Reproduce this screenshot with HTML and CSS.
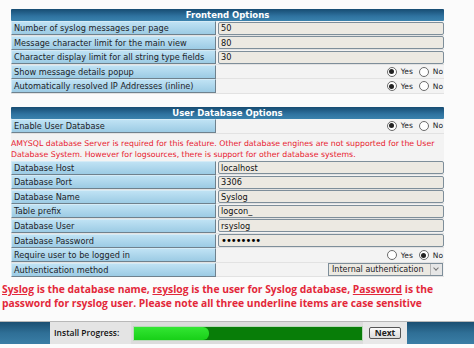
FILE: index.html
```html
<!DOCTYPE html>
<html lang="en">
<head>
    <meta charset="UTF-8">
    <title>Install - Step 7</title>
    <link rel="stylesheet" href="styles.css">
</head>
<body>
    <div class="page">
        <div class="panel">
            <div class="head">Frontend Options</div>
            <div class="row"><div class="label">Number of syslog messages per page</div><div class="value"><input class="field" value="50"></div></div>
            <div class="row"><div class="label">Message character limit for the main view</div><div class="value"><input class="field" value="80"></div></div>
            <div class="row"><div class="label">Character display limit for all string type fields</div><div class="value"><input class="field" value="30"></div></div>
            <div class="row"><div class="label">Show message details popup</div><div class="value opts"><span class="radio on"></span>Yes<span class="radio"></span>No</div></div>
            <div class="row"><div class="label">Automatically resolved IP Addresses (inline)</div><div class="value opts"><span class="radio on"></span>Yes<span class="radio"></span>No</div></div>
        </div>

        <div class="panel second">
            <div class="head">User Database Options</div>
            <div class="row"><div class="label">Enable User Database</div><div class="value opts"><span class="radio on"></span>Yes<span class="radio"></span>No</div></div>
            <p class="warn">AMYSQL database Server is required for this feature. Other database engines are not supported for the User<br>Database System. However for logsources, there is support for other database systems.</p>
            <div class="row"><div class="label">Database Host</div><div class="value"><input class="field" value="localhost"></div></div>
            <div class="row"><div class="label">Database Port</div><div class="value"><input class="field" value="3306"></div></div>
            <div class="row"><div class="label">Database Name</div><div class="value"><input class="field" value="Syslog"></div></div>
            <div class="row"><div class="label">Table prefix</div><div class="value"><input class="field" value="logcon_"></div></div>
            <div class="row"><div class="label">Database User</div><div class="value"><input class="field" value="rsyslog"></div></div>
            <div class="row"><div class="label">Database Password</div><div class="value"><input class="field pass" type="password" value="12345678"></div></div>
            <div class="row"><div class="label">Require user to be logged in</div><div class="value opts"><span class="radio"></span>Yes<span class="radio on"></span>No</div></div>
            <div class="row"><div class="label">Authentication method</div><div class="value opts"><div class="select"><span>Internal authentication</span><span class="arrow"></span></div></div></div>
        </div>

        <p class="note"><u>Syslog</u> is the database name, <u>rsyslog</u> is the user for Syslog database, <u>Password</u> is the<br>password for rsyslog user. Please note all three underline items are case sensitive</p>
    </div>

    <div class="bar">
        <div class="blue left"></div>
        <div class="progress-label">Install Progress:</div>
        <div class="progress"><div class="fill"></div></div>
        <div class="next-cell"><button class="next">Next</button></div>
        <div class="blue right"></div>
    </div>
</body>
</html>
```

FILE: styles.css
```css
*,*::after,*::before{
    box-sizing: border-box;
}
body{
    margin: 0;
    background-color: #fbfbfb;
    font-family: "DejaVu Sans", Verdana, sans-serif;
    font-size: 8px;
    color: #1c2328;
    height: 348px;
    overflow: hidden;
}
.page{
    padding: 9px 30px 0 11px;
}
.panel{
    background-color: #f3f3f3;
}
.panel.second{
    margin-top: 13px;
}
.head{
    height: 12px;
    line-height: 12px;
    text-align: center;
    color: white;
    font-weight: bold;
    font-size: 8.5px;
    background: linear-gradient(#174c72, #2f73a0 60%, #3b82ad);
    border-radius: 1px;
}
.row{
    display: grid;
    grid-template-columns: 205px 1fr;
    gap: 1px;
    height: 14.6px;
    border-bottom: 1px solid #e2e2e2;
}
.label{
    background: linear-gradient(#bfe2f4, #9ccbe4);
    border: 1px solid #d5ebf6;
    border-right-color: #6f818d;
    border-bottom-color: #6f818d;
    padding-left: 2px;
    line-height: 12px;
    font-size: 8.2px;
    white-space: nowrap;
}
.value{
    display: flex;
    align-items: center;
    padding: 0 0 0 1px;
}
.field{
    width: 100%;
    height: 13px;
    margin: 0;
    padding: 0 2px;
    font-family: "DejaVu Sans", Verdana, sans-serif;
    font-size: 8.2px;
    color: #111;
    background-color: #ece9e2;
    border: 1px solid #7e8e9a;
    border-radius: 2px;
}
.field.pass{
    font-size: 10px;
    letter-spacing: -1px;
    color: #000;
}
.opts{
    justify-content: flex-end;
    padding-right: 1px;
    font-size: 7.5px;
}
.radio{
    width: 10px;
    height: 10px;
    border: 1px solid #6b6b6b;
    border-radius: 50%;
    background-color: white;
    margin: 0 4px 0 6px;
    display: flex;
    align-items: center;
    justify-content: center;
}
.radio.on::after{
    content: '';
    width: 5px;
    height: 5px;
    border-radius: 50%;
    background-color: #222;
}
.select{
    display: flex;
    align-items: center;
    width: 115px;
    height: 13px;
    border: 1px solid #7e8e9a;
    background-color: #ece9e2;
    font-size: 8px;
    padding-left: 3px;
}
.select span:first-child{
    flex: 1;
}
.arrow{
    width: 12px;
    height: 11px;
    border-left: 1px solid #b5b5b5;
    background-color: #e6e6e6;
    position: relative;
}
.arrow::after{
    content: '';
    position: absolute;
    left: 3px;
    top: 2px;
    width: 4px;
    height: 4px;
    border-right: 1px solid #777;
    border-bottom: 1px solid #777;
    transform: rotate(45deg);
}
.warn{
    margin: 0;
    padding: 4px 0 0 0;
    color: #e8202e;
    font-size: 7.8px;
    line-height: 11px;
    height: 27px;
    white-space: nowrap;
}
.note{
    margin: 5px 0 0 -9px;
    width: 445px;
    color: #e3283a;
    font-family: "Open Sans", sans-serif;
    font-weight: bold;
    font-size: 10.3px;
    line-height: 14px;
    white-space: nowrap;
}
.bar{
    position: absolute;
    top: 321px;
    left: 0;
    width: 474px;
    height: 23px;
    display: flex;
    background-color: #dcdcdc;
    border-top: 1px solid #b8b8b8;
}
.blue{
    background: linear-gradient(#1b4f72, #2f6f96 50%, #3a7ea6);
}
.blue.left{
    width: 50px;
}
.blue.right{
    flex: 1;
}
.progress-label{
    width: 81px;
    padding-left: 4px;
    line-height: 21px;
    font-family: "Open Sans", sans-serif;
    font-size: 8.5px;
    font-weight: 600;
    background-color: #e4e4e4;
    color: #111;
}
.progress{
    width: 230px;
    margin: 4px 0 3px 2px;
    background-color: #087d08;
    border: 1px solid #b9d8b9;
}
.fill{
    width: 33%;
    height: 100%;
    border-radius: 0 6px 6px 0;
    background: linear-gradient(#33e633, #18d018);
}
.next-cell{
    width: 44px;
    display: flex;
    align-items: center;
    justify-content: center;
    background-color: #e8e8e8;
}
.next{
    width: 32px;
    height: 12px;
    padding: 0;
    font-family: "Open Sans", sans-serif;
    font-size: 8.5px;
    font-weight: bold;
    color: #222;
    border: 1px solid #555;
    border-radius: 2px;
    background: linear-gradient(#fafafa, #dcdcdc);
    line-height: 10px;
}
```
